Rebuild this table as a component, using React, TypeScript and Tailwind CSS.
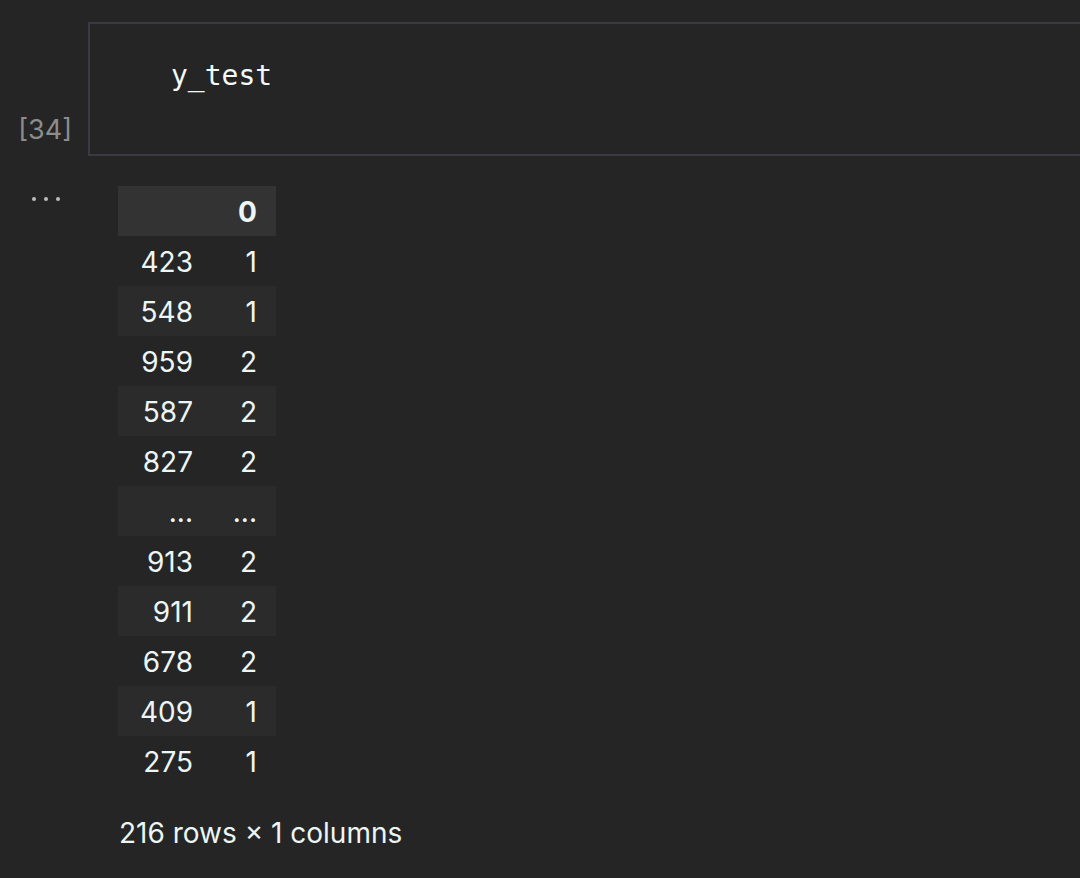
import React from "react";

const rows: [string, string][] = [
  ["423", "1"],
  ["548", "1"],
  ["959", "2"],
  ["587", "2"],
  ["827", "2"],
  ["...", "..."],
  ["913", "2"],
  ["911", "2"],
  ["678", "2"],
  ["409", "1"],
  ["275", "1"],
];

export default function App() {
  return (
    <div className="w-[1080px] h-[878px] bg-[#252525] overflow-hidden text-[#ecf6f6] pt-[22px]" style={{ fontFamily: "Inter, 'Noto Sans', sans-serif" }}>
      {/* code cell row */}
      <div className="flex">
        <div className="w-[88px] shrink-0 flex items-end justify-end pr-[16px] pb-[13px]">
          <span className="text-[27px] leading-none text-[#8c8c8c]">[34]</span>
        </div>
        <div className="flex-1 h-[134px] border-2 border-r-0 border-[#3a3a41] pl-[81px] pt-[33px]">
          <div className="text-[28px] leading-[38px] text-[#f2fafa]" style={{ fontFamily: "'DejaVu Sans Mono', monospace" }}>y_test</div>
        </div>
      </div>
      {/* output row */}
      <div className="flex mt-[30px]">
        <div className="w-[118px] shrink-0 flex pl-[32px] pt-[11px] gap-[8px]">
          <span className="w-[4px] h-[4px] rounded-full bg-[#bdbdbd]" />
          <span className="w-[4px] h-[4px] rounded-full bg-[#bdbdbd]" />
          <span className="w-[4px] h-[4px] rounded-full bg-[#bdbdbd]" />
        </div>
        <div className="flex flex-col">
          <div className="flex flex-col w-[158px] text-[28px]">
            <div className="flex h-[50px] items-center bg-[#333333] pt-[2px]">
              <div className="w-[99px]" />
              <div className="w-[59px] text-right pr-[19px] font-bold">0</div>
            </div>
            {rows.map(([i, v], k) => (
              <div key={k} className={`flex h-[50px] items-center pt-[2px] ${k % 2 === 1 ? "bg-[#2b2b2b]" : ""}`}>
                <div className="w-[99px] text-right pr-[24px]">{i}</div>
                <div className="w-[59px] text-right pr-[19px]">{v}</div>
              </div>
            ))}
          </div>
          <div className="mt-[30px] text-[28px] leading-[34px] pl-[1px]">216 rows × 1 columns</div>
        </div>
      </div>
    </div>
  );
}
